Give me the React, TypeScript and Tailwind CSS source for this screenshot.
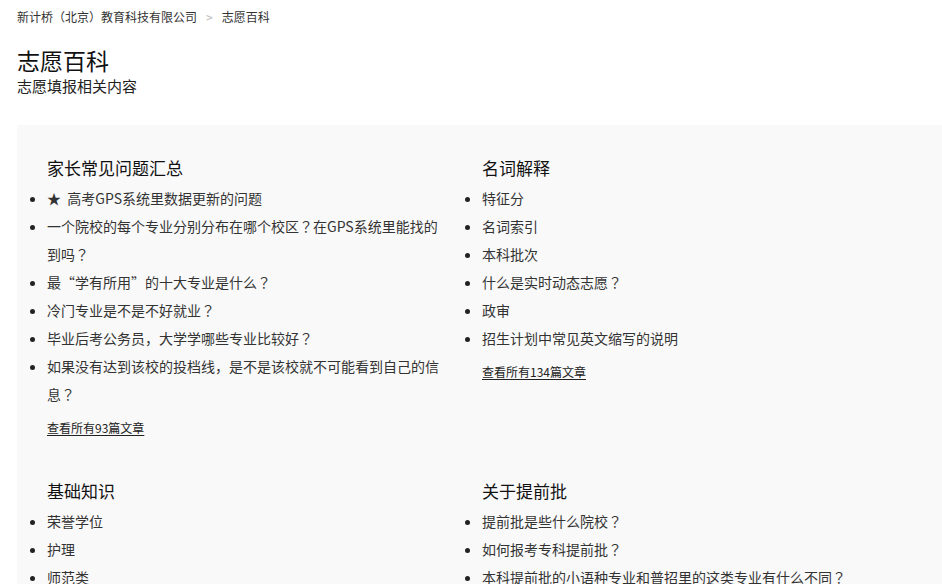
import React from "react";

interface Section {
  title: string;
  items: string[];
  more?: string;
}

const sections: Section[] = [
  {
    title: "家长常见问题汇总",
    items: [
      "★  高考GPS系统里数据更新的问题",
      "一个院校的每个专业分别分布在哪个校区？在GPS系统里能找的到吗？",
      "最“学有所用”的十大专业是什么？",
      "冷门专业是不是不好就业？",
      "毕业后考公务员，大学学哪些专业比较好？",
      "如果没有达到该校的投档线，是不是该校就不可能看到自己的信息？",
    ],
    more: "查看所有93篇文章",
  },
  {
    title: "名词解释",
    items: [
      "特征分",
      "名词索引",
      "本科批次",
      "什么是实时动态志愿？",
      "政审",
      "招生计划中常见英文缩写的说明",
    ],
    more: "查看所有134篇文章",
  },
  {
    title: "基础知识",
    items: ["荣誉学位", "护理", "师范类"],
  },
  {
    title: "关于提前批",
    items: [
      "提前批是些什么院校？",
      "如何报考专科提前批？",
      "本科提前批的小语种专业和普招里的这类专业有什么不同？",
    ],
  },
];

// full-width question marks sit centered in the reference, JP glyph does that
function Text({ value }: { value: string }) {
  const parts = value.split("？");
  return (
    <>
      {parts.map((p, i) => (
        <React.Fragment key={i}>
          {p}
          {i < parts.length - 1 && (
            <span style={{ fontFamily: '"Noto Sans CJK JP", sans-serif' }}>？</span>
          )}
        </React.Fragment>
      ))}
    </>
  );
}

function SectionBlock({ section }: { section: Section }) {
  return (
    <div className="pr-[35px] mb-[41px]">
      <h3 className="text-[17px] leading-[24px] text-[#111] mb-[4px]">
        {section.title}
      </h3>
      <ul className="list-disc pl-0 ml-0 marker:text-[#222]">
        {section.items.map((item) => (
          <li
            key={item}
            className="text-[14px] leading-[28px] text-[#333] whitespace-pre-wrap"
          >
            <Text value={item} />
          </li>
        ))}
      </ul>
      {section.more && (
        <a
          href="#"
          className="block mt-[10px] text-[12px] leading-[20px] text-[#222] underline underline-offset-2"
        >
          {section.more}
        </a>
      )}
    </div>
  );
}

export default function App() {
  return (
    <div
      className="min-h-screen bg-white overflow-hidden"
      style={{ fontFamily: '"Noto Sans CJK SC", "Noto Sans", sans-serif' }}
    >
      <div className="px-[17px] pt-[8px]">
        <div className="flex items-center text-[12px] leading-[18px] text-[#333]">
          <span>新计桥（北京）教育科技有限公司</span>
          <span className="mx-[9px] text-[#bbb]">&gt;</span>
          <span>志愿百科</span>
        </div>
        <h1 className="mt-[19px] text-[23px] leading-[30px] text-[#111]">
          志愿百科
        </h1>
        <p className="text-[15px] leading-[22px] text-[#222]">
          志愿填报相关内容
        </p>
      </div>

      <div className="ml-[17px] mt-[28px] bg-[#f9f9f9] pt-[31px] pl-[30px]">
        <div className="grid grid-cols-[435px_435px]">
          {sections.map((s) => (
            <SectionBlock key={s.title} section={s} />
          ))}
        </div>
      </div>
    </div>
  );
}
